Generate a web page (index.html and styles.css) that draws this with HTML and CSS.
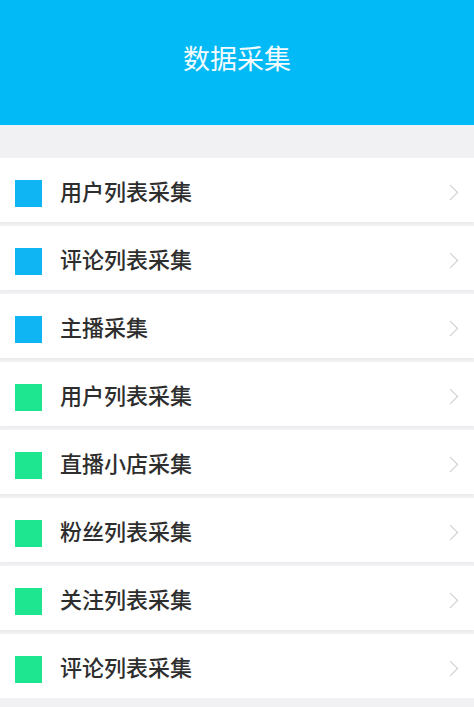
FILE: index.html
```html
<!DOCTYPE html>
<html lang="zh-CN">
<head>
	<meta charset="UTF-8">
	<title>数据采集</title>
	<link rel="stylesheet" href="styles.css">
</head>
<body>
	<div class="header">
		<h1 class="title">数据采集</h1>
	</div>
	<ul class="menu">
		<li class="item"><i class="mark blue"></i><span class="label">用户列表采集</span><span class="arrow"></span></li>
		<li class="item"><i class="mark blue"></i><span class="label">评论列表采集</span><span class="arrow"></span></li>
		<li class="item"><i class="mark blue"></i><span class="label">主播采集</span><span class="arrow"></span></li>
		<li class="item"><i class="mark green"></i><span class="label">用户列表采集</span><span class="arrow"></span></li>
		<li class="item"><i class="mark green"></i><span class="label">直播小店采集</span><span class="arrow"></span></li>
		<li class="item"><i class="mark green"></i><span class="label">粉丝列表采集</span><span class="arrow"></span></li>
		<li class="item"><i class="mark green"></i><span class="label">关注列表采集</span><span class="arrow"></span></li>
		<li class="item"><i class="mark green"></i><span class="label">评论列表采集</span><span class="arrow"></span></li>
	</ul>
</body>
</html>
```

FILE: styles.css
```css
* {
	margin: 0;
	padding: 0;
	box-sizing: border-box;
}
body {
	background-color: #f1f1f3;
	font-family: "Noto Sans CJK SC", "Noto Sans", sans-serif;
	color: #2e2e2e;
}
.header {
	height: 125px;
	background-color: #02baf5;
	display: flex;
	align-items: center;
	justify-content: center;
	padding-bottom: 10px;
}
.title {
	color: #f4fbff;
	font-size: 27px;
	font-weight: 400;
}
.menu {
	list-style-type: none;
	padding-top: 33px;
	display: flex;
	flex-direction: column;
	gap: 4px;
}
.item {
	height: 64px;
	background-color: #fff;
	display: flex;
	align-items: center;
	padding: 0 12px 0 15px;
	box-shadow: 0 1px 2px rgba(0, 0, 0, 0.04);
}
.mark {
	width: 27px;
	height: 27px;
	margin-top: 6px;
	flex-shrink: 0;
}
.blue {
	background-color: #0fb5f2;
}
.green {
	background-color: #1ee690;
}
.label {
	margin-left: 18px;
	font-size: 22px;
	font-weight: 500;
	flex: 1;
}
.arrow {
	width: 11px;
	height: 11px;
	border-top: 1.5px solid #cccccc;
	border-right: 1.5px solid #cccccc;
	transform: rotate(45deg);
	margin: 4px 6px 0 0;
}
```
